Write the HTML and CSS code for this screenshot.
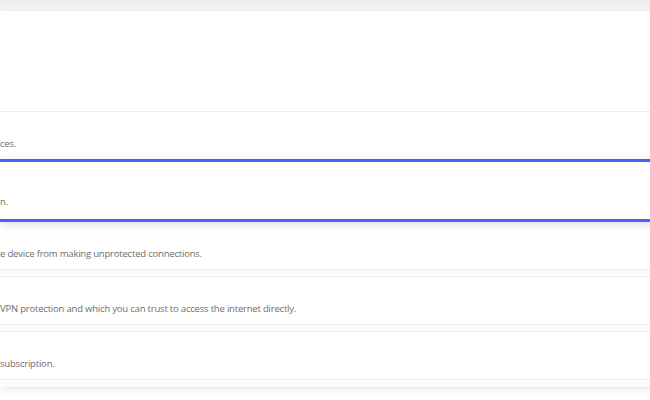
FILE: index.html
```html
<!DOCTYPE html>
<html>
<head>
<meta charset="utf-8">
<link rel="stylesheet" href="styles.css">
</head>
<body>
<div class="page">
  <div class="panel">
    <div class="item item-top"></div>
    <div class="item item-b"><p class="desc">ces.</p></div>
    <div class="item item-selected"><p class="desc">n.</p></div>
    <div class="item item-d"><p class="desc">e device from making unprotected connections.</p></div>
    <div class="gap"></div>
    <div class="item item-e"><p class="desc">VPN protection and which you can trust to access the internet directly.</p></div>
    <div class="gap"></div>
    <div class="item item-f"><p class="desc"> subscription.</p></div>
    <div class="gap gap-last"></div>
  </div>
</div>
</body>
</html>
```
FILE: styles.css
```css
html, body {
  margin: 0;
  padding: 0;
  background: #ffffff;
  overflow: hidden;
}
.page {
  width: 650px;
  height: 400px;
  padding-top: 11px;
  box-sizing: border-box;
  background: linear-gradient(#ececec, #f7f7f7 11px, #ffffff 11px);
}
.panel {
  width: 680px;
  background: #ffffff;
  box-shadow: 0 2px 8px rgba(0, 0, 0, 0.10);
  display: flex;
  flex-direction: column;
}
.item {
  display: flex;
  align-items: flex-end;
  box-sizing: border-box;
  background: #ffffff;
  position: relative;
}
.desc {
  margin: 0;
  font-family: "Open Sans", "Noto Sans", sans-serif;
  font-size: 9.5px;
  letter-spacing: -0.2px;
  line-height: 14px;
  color: #6e6e6e;
  white-space: nowrap;
}
.item-top {
  height: 101px;
  border-bottom: 1px solid #ececec;
}
.item-b {
  height: 47px;
  padding-bottom: 8px;
}
.item-selected {
  height: 63px;
  border-top: 3px solid #4861fd;
  border-bottom: 3px solid #4861fd;
  padding-bottom: 10px;
  box-shadow: 0 3px 10px rgba(0, 0, 0, 0.13);
  z-index: 1;
}
.item-d, .item-e, .item-f {
  border-bottom: 1px solid #ececec;
  padding-bottom: 8px;
}
.item-d { height: 48px; }
.item-e { height: 48px; }
.item-f { height: 48px; }
.gap {
  height: 7px;
  box-sizing: border-box;
  background: #fbfbfb;
  border-bottom: 1px solid #ececec;
}
.gap-last {
  border-bottom: none;
  height: 7px;
}
```
